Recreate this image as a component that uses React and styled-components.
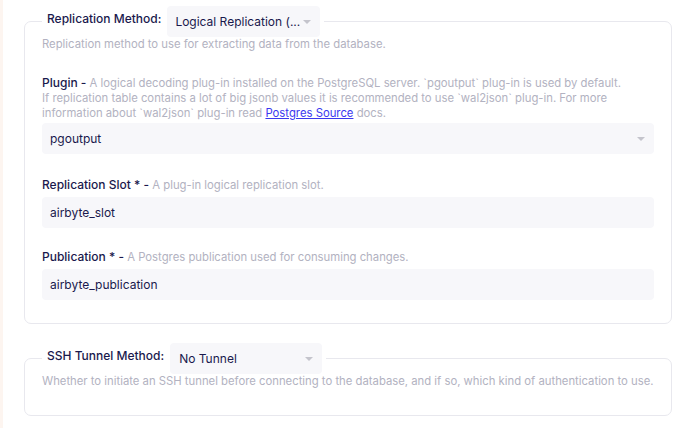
import React from "react";
import styled, { createGlobalStyle } from "styled-components";

const GlobalStyle = createGlobalStyle`
  html, body {
    margin: 0;
    padding: 0;
    background: #ffffff;
  }
  body {
    font-family: Inter, "Noto Sans", sans-serif;
    -webkit-font-smoothing: antialiased;
  }
`;

const Page = styled.div`
  min-height: 428px;
  box-sizing: border-box;
  border-left: 3px solid #fdf5f0;
  padding: 6px 18px 0 21px;
`;

const Group = styled.fieldset`
  margin: 0 0 19px 0;
  padding: 0 17px ${(p) => p.$bottom}px 17px;
  border: 1px solid #e8e8ee;
  border-radius: 7px;
  min-width: 0;
`;

const Legend = styled.legend`
  display: flex;
  align-items: center;
  padding: 0 4px 0 5px;
`;

const LegendLabel = styled.span`
  font-size: 12px;
  font-weight: 500;
  color: #1a194d;
  white-space: nowrap;
  margin-right: ${(p) => p.$gap}px;
  margin-top: -7px;
`;

const Select = styled.div`
  box-sizing: border-box;
  display: flex;
  align-items: center;
  justify-content: space-between;
  width: ${(p) => (p.$width ? `${p.$width}px` : "100%")};
  height: 31px;
  padding: 0 9px 0 ${(p) => p.$pad || 8}px;
  background: #f7f7fa;
  border-radius: 4px;
  font-size: 12px;
  white-space: nowrap;
  color: #1a194d;
`;

const Caret = styled.span`
  width: 0;
  height: 0;
  border-left: 4px solid transparent;
  border-right: 4px solid transparent;
  border-top: 4px solid #c4c4cc;
  margin-top: 1px;
`;

const Hint = styled.div`
  font-size: 11.3px;
  line-height: 15px;
  color: #b2b2c1;
  white-space: nowrap;
`;

const Field = styled.div`
  margin-top: ${(p) => p.$top}px;
`;

const Label = styled.div`
  font-size: 11.3px;
  line-height: 15px;
  color: #b2b2c1;
  white-space: nowrap;
  margin-bottom: ${(p) => p.$gap ?? 4}px;
`;

const Name = styled.span`
  font-size: 12px;
  font-weight: 500;
  color: #1a194d;
`;

const Link = styled.a`
  color: #3b37f0;
  text-decoration: underline;
`;

const Input = styled.div`
  box-sizing: border-box;
  height: 31px;
  display: flex;
  align-items: center;
  padding: 0 8px;
  background: #f7f7fa;
  border-radius: 4px;
  font-size: 12px;
  color: #1a194d;
`;

function App() {
  return (
    <>
      <GlobalStyle />
      <Page>
        <Group $bottom={23}>
          <Legend>
            <LegendLabel $gap={6}>Replication Method:</LegendLabel>
            <Select $width={153}>
              Logical Replication (...
              <Caret />
            </Select>
          </Legend>
          <Hint>Replication method to use for extracting data from the database.</Hint>

          <Field $top={23}>
            <Label $gap={2}>
              <Name>Plugin - </Name>A logical decoding plug-in installed on the PostgreSQL
              server. `pgoutput` plug-in is used by default.
              <br />
              If replication table contains a lot of big jsonb values it is recommended to use
              `wal2json` plug-in. For more
              <br />
              information about `wal2json` plug-in read <Link>Postgres Source</Link> docs.
            </Label>
            <Select>
              pgoutput
              <Caret />
            </Select>
          </Field>

          <Field $top={23}>
            <Label>
              <Name>Replication Slot * - </Name>A plug-in logical replication slot.
            </Label>
            <Input>airbyte_slot</Input>
          </Field>

          <Field $top={21}>
            <Label>
              <Name>Publication * - </Name>A Postgres publication used for consuming changes.
            </Label>
            <Input>airbyte_publication</Input>
          </Field>
        </Group>

        <Group $bottom={26}>
          <Legend>
            <LegendLabel $gap={6}>SSH Tunnel Method:</LegendLabel>
            <Select $width={152} $pad={9}>
              No Tunnel
              <Caret />
            </Select>
          </Legend>
          <Hint>
            Whether to initiate an SSH tunnel before connecting to the database, and if so, which
            kind of authentication to use.
          </Hint>
        </Group>
      </Page>
    </>
  );
}

export default App;
